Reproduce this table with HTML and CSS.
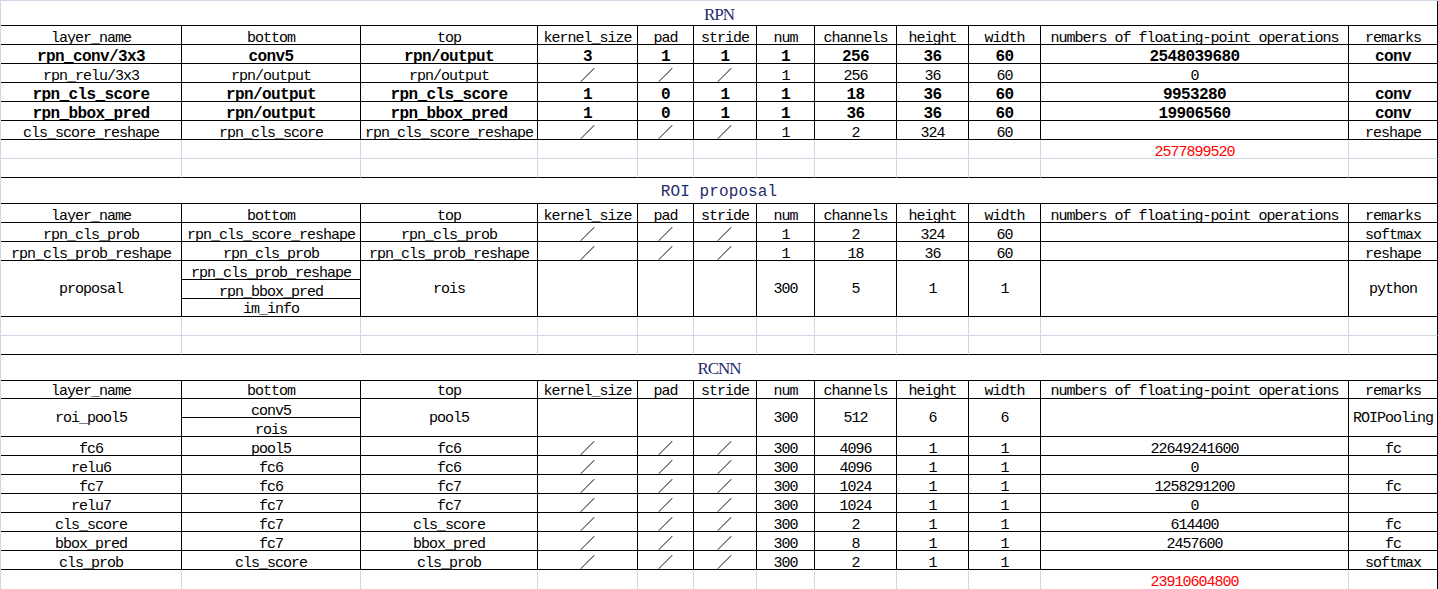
FILE: index.html
```html
<!DOCTYPE html>
<html>
<head>
<meta charset="utf-8">
<title>Faster R-CNN FLOPs</title>
<link rel="stylesheet" href="styles.css">
</head>
<body>
<div class="sheet">

  <section class="grid g-rpn">
    <div class="title t-serif first">RPN</div>
    <div class="row">
      <div class="c">layer_name</div><div class="c">bottom</div><div class="c">top</div><div class="c">kernel_size</div><div class="c">pad</div><div class="c">stride</div><div class="c">num</div><div class="c">channels</div><div class="c">height</div><div class="c">width</div><div class="c">numbers of floating-point operations</div><div class="c">remarks</div>
    </div>
    <div class="row bold">
      <div class="c">rpn_conv/3x3</div><div class="c">conv5</div><div class="c">rpn/output</div><div class="c">3</div><div class="c">1</div><div class="c">1</div><div class="c">1</div><div class="c">256</div><div class="c">36</div><div class="c">60</div><div class="c">2548039680</div><div class="c">conv</div>
    </div>
    <div class="row">
      <div class="c">rpn_relu/3x3</div><div class="c">rpn/output</div><div class="c">rpn/output</div><div class="c m"><span class="sl">／</span></div><div class="c m"><span class="sl">／</span></div><div class="c m"><span class="sl">／</span></div><div class="c">1</div><div class="c">256</div><div class="c">36</div><div class="c">60</div><div class="c">0</div><div class="c"></div>
    </div>
    <div class="row bold">
      <div class="c">rpn_cls_score</div><div class="c">rpn/output</div><div class="c">rpn_cls_score</div><div class="c">1</div><div class="c">0</div><div class="c">1</div><div class="c">1</div><div class="c">18</div><div class="c">36</div><div class="c">60</div><div class="c">9953280</div><div class="c">conv</div>
    </div>
    <div class="row bold">
      <div class="c">rpn_bbox_pred</div><div class="c">rpn/output</div><div class="c">rpn_bbox_pred</div><div class="c">1</div><div class="c">0</div><div class="c">1</div><div class="c">1</div><div class="c">36</div><div class="c">36</div><div class="c">60</div><div class="c">19906560</div><div class="c">conv</div>
    </div>
    <div class="row">
      <div class="c">cls_score_reshape</div><div class="c">rpn_cls_score</div><div class="c">rpn_cls_score_reshape</div><div class="c m"><span class="sl">／</span></div><div class="c m"><span class="sl">／</span></div><div class="c m"><span class="sl">／</span></div><div class="c">1</div><div class="c">2</div><div class="c">324</div><div class="c">60</div><div class="c"></div><div class="c">reshape</div>
    </div>
    <div class="row blank">
      <div class="c"></div><div class="c"></div><div class="c"></div><div class="c"></div><div class="c"></div><div class="c"></div><div class="c"></div><div class="c"></div><div class="c"></div><div class="c"></div><div class="c red">2577899520</div><div class="c"></div>
    </div>
    <div class="row blank edge">
      <div class="c"></div><div class="c"></div><div class="c"></div><div class="c"></div><div class="c"></div><div class="c"></div><div class="c"></div><div class="c"></div><div class="c"></div><div class="c"></div><div class="c"></div><div class="c"></div>
    </div>
  </section>

  <section class="grid g-roi">
    <div class="title t-mono">ROI proposal</div>
    <div class="row">
      <div class="c">layer_name</div><div class="c">bottom</div><div class="c">top</div><div class="c">kernel_size</div><div class="c">pad</div><div class="c">stride</div><div class="c">num</div><div class="c">channels</div><div class="c">height</div><div class="c">width</div><div class="c">numbers of floating-point operations</div><div class="c">remarks</div>
    </div>
    <div class="row">
      <div class="c">rpn_cls_prob</div><div class="c">rpn_cls_score_reshape</div><div class="c">rpn_cls_prob</div><div class="c m"><span class="sl">／</span></div><div class="c m"><span class="sl">／</span></div><div class="c m"><span class="sl">／</span></div><div class="c">1</div><div class="c">2</div><div class="c">324</div><div class="c">60</div><div class="c"></div><div class="c">softmax</div>
    </div>
    <div class="row">
      <div class="c">rpn_cls_prob_reshape</div><div class="c">rpn_cls_prob</div><div class="c">rpn_cls_prob_reshape</div><div class="c m"><span class="sl">／</span></div><div class="c m"><span class="sl">／</span></div><div class="c m"><span class="sl">／</span></div><div class="c">1</div><div class="c">18</div><div class="c">36</div><div class="c">60</div><div class="c"></div><div class="c">reshape</div>
    </div>
    <div class="row">
      <div class="c m r3">proposal</div>
      <div class="c">rpn_cls_prob_reshape</div>
      <div class="c m r3">rois</div>
      <div class="c m r3"></div><div class="c m r3"></div><div class="c m r3"></div>
      <div class="c m r3">300</div><div class="c m r3">5</div><div class="c m r3">1</div><div class="c m r3">1</div>
      <div class="c m r3"></div><div class="c m r3">python</div>
      <div class="c">rpn_bbox_pred</div>
      <div class="c s">im_info</div>
    </div>
    <div class="row blank">
      <div class="c"></div><div class="c"></div><div class="c"></div><div class="c"></div><div class="c"></div><div class="c"></div><div class="c"></div><div class="c"></div><div class="c"></div><div class="c"></div><div class="c"></div><div class="c"></div>
    </div>
    <div class="row blank edge">
      <div class="c"></div><div class="c"></div><div class="c"></div><div class="c"></div><div class="c"></div><div class="c"></div><div class="c"></div><div class="c"></div><div class="c"></div><div class="c"></div><div class="c"></div><div class="c"></div>
    </div>
  </section>

  <section class="grid g-rcnn">
    <div class="title t-serif">RCNN</div>
    <div class="row short">
      <div class="c">layer_name</div><div class="c">bottom</div><div class="c">top</div><div class="c">kernel_size</div><div class="c">pad</div><div class="c">stride</div><div class="c">num</div><div class="c">channels</div><div class="c">height</div><div class="c">width</div><div class="c">numbers of floating-point operations</div><div class="c">remarks</div>
    </div>
    <div class="row">
      <div class="c m r2">roi_pool5</div>
      <div class="c">conv5</div>
      <div class="c m r2">pool5</div>
      <div class="c m r2"></div><div class="c m r2"></div><div class="c m r2"></div>
      <div class="c m r2">300</div><div class="c m r2">512</div><div class="c m r2">6</div><div class="c m r2">6</div>
      <div class="c m r2"></div><div class="c m r2">ROIPooling</div>
      <div class="c">rois</div>
    </div>
    <div class="row">
      <div class="c">fc6</div><div class="c">pool5</div><div class="c">fc6</div><div class="c m"><span class="sl">／</span></div><div class="c m"><span class="sl">／</span></div><div class="c m"><span class="sl">／</span></div><div class="c">300</div><div class="c">4096</div><div class="c">1</div><div class="c">1</div><div class="c">22649241600</div><div class="c">fc</div>
    </div>
    <div class="row">
      <div class="c">relu6</div><div class="c">fc6</div><div class="c">fc6</div><div class="c m"><span class="sl">／</span></div><div class="c m"><span class="sl">／</span></div><div class="c m"><span class="sl">／</span></div><div class="c">300</div><div class="c">4096</div><div class="c">1</div><div class="c">1</div><div class="c">0</div><div class="c"></div>
    </div>
    <div class="row">
      <div class="c">fc7</div><div class="c">fc6</div><div class="c">fc7</div><div class="c m"><span class="sl">／</span></div><div class="c m"><span class="sl">／</span></div><div class="c m"><span class="sl">／</span></div><div class="c">300</div><div class="c">1024</div><div class="c">1</div><div class="c">1</div><div class="c">1258291200</div><div class="c">fc</div>
    </div>
    <div class="row">
      <div class="c">relu7</div><div class="c">fc7</div><div class="c">fc7</div><div class="c m"><span class="sl">／</span></div><div class="c m"><span class="sl">／</span></div><div class="c m"><span class="sl">／</span></div><div class="c">300</div><div class="c">1024</div><div class="c">1</div><div class="c">1</div><div class="c">0</div><div class="c"></div>
    </div>
    <div class="row">
      <div class="c">cls_score</div><div class="c">fc7</div><div class="c">cls_score</div><div class="c m"><span class="sl">／</span></div><div class="c m"><span class="sl">／</span></div><div class="c m"><span class="sl">／</span></div><div class="c">300</div><div class="c">2</div><div class="c">1</div><div class="c">1</div><div class="c">614400</div><div class="c">fc</div>
    </div>
    <div class="row">
      <div class="c">bbox_pred</div><div class="c">fc7</div><div class="c">bbox_pred</div><div class="c m"><span class="sl">／</span></div><div class="c m"><span class="sl">／</span></div><div class="c m"><span class="sl">／</span></div><div class="c">300</div><div class="c">8</div><div class="c">1</div><div class="c">1</div><div class="c">2457600</div><div class="c">fc</div>
    </div>
    <div class="row">
      <div class="c">cls_prob</div><div class="c">cls_score</div><div class="c">cls_prob</div><div class="c m"><span class="sl">／</span></div><div class="c m"><span class="sl">／</span></div><div class="c m"><span class="sl">／</span></div><div class="c">300</div><div class="c">2</div><div class="c">1</div><div class="c">1</div><div class="c"></div><div class="c">softmax</div>
    </div>
    <div class="row blank">
      <div class="c"></div><div class="c"></div><div class="c"></div><div class="c"></div><div class="c"></div><div class="c"></div><div class="c"></div><div class="c"></div><div class="c"></div><div class="c"></div><div class="c red">23910604800</div><div class="c"></div>
    </div>
  </section>

</div>
</body>
</html>
```

FILE: styles.css
```css
html, body {
  margin: 0;
  padding: 0;
  background: #ffffff;
}

body {
  font-family: "Liberation Mono", "DejaVu Sans Mono", monospace;
  font-size: 15px;
  letter-spacing: -1px;
  color: #000000;
  overflow: hidden;
}

.sheet {
  width: 1438px;
  box-sizing: border-box;
  border-top: 1px solid #d0d7e5;
  border-left: 1px solid #d0d7e5;
}

.grid {
  display: grid;
  grid-template-columns: 181px 179px 177px 100px 56px 63px 58px 82px 72px 72px 308px 89px;
}

.g-rpn {
  grid-template-rows: 25px repeat(8, 19px);
}

.g-roi {
  grid-template-rows: 26px repeat(5, 19px) 18px 19px 19px;
}

.g-rcnn {
  grid-template-rows: 26px 18px repeat(9, 19px);
}

.row {
  display: contents;
}

.c {
  box-sizing: border-box;
  border-right: 1px solid #000000;
  border-bottom: 1px solid #000000;
  text-align: center;
  white-space: nowrap;
  line-height: 18px;
  padding-top: 4px;
  min-width: 0;
}

.short .c,
.c.s {
  padding-top: 2px;
}

.m {
  display: flex;
  align-items: center;
  justify-content: center;
  padding-top: 2px;
}

.r2 {
  grid-row: span 2;
}

.r3 {
  grid-row: span 3;
}

.bold .c {
  font-weight: bold;
  font-size: 16px;
  letter-spacing: -0.6px;
  padding-top: 3px;
}

.blank .c {
  border-right-color: #d0d7e5;
  border-bottom-color: #d0d7e5;
}

.blank .c:last-child {
  border-right-color: #000000;
}

.blank.edge .c {
  border-bottom-color: #000000;
}

.red {
  color: #ff0000;
}

.sl {
  display: inline-block;
  font-family: "Noto Sans CJK SC", sans-serif;
  font-weight: 400;
  font-size: 15px;
  line-height: 15px;
  letter-spacing: 0;
  color: #000000;
  will-change: transform;
}

.title {
  grid-column: 1 / -1;
  box-sizing: border-box;
  border-right: 1px solid #000000;
  border-bottom: 1px solid #000000;
  text-align: center;
  color: #1f2a6e;
  white-space: nowrap;
}

.t-serif {
  font-family: "Liberation Serif", "Times New Roman", serif;
  font-size: 17px;
  letter-spacing: -1px;
  line-height: 19px;
  padding-top: 4px;
}

.t-mono {
  font-size: 16px;
  letter-spacing: 0.1px;
  line-height: 19px;
  padding-top: 5px;
}
```
